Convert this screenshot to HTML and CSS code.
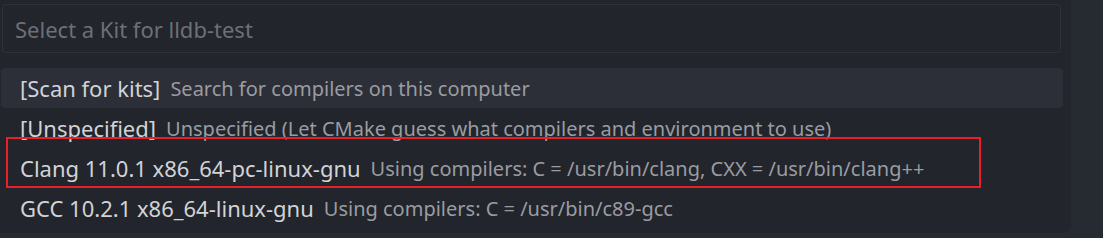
FILE: index.html
```html
<!DOCTYPE html>
<html lang="en">
<head>
  <meta charset="UTF-8">
  <title>Select a Kit</title>
  <link rel="stylesheet" href="styles.css">
</head>
<body>

  <div class="panel">
    <div class="entrada">Select a Kit for lldb-test</div>

    <div class="lista">
      <div class="fila activa">
        <span class="etiqueta">[Scan for kits]</span>
        <span class="desc">Search for compilers on this computer</span>
      </div>
      <div class="fila">
        <span class="etiqueta">[Unspecified]</span>
        <span class="desc">Unspecified (Let CMake guess what compilers and environment to use)</span>
      </div>
      <div class="fila marcada">
        <span class="etiqueta">Clang 11.0.1 x86_64-pc-linux-gnu</span>
        <span class="desc">Using compilers: C = /usr/bin/clang, CXX = /usr/bin/clang++</span>
      </div>
      <div class="fila">
        <span class="etiqueta">GCC 10.2.1 x86_64-linux-gnu</span>
        <span class="desc">Using compilers: C = /usr/bin/c89-gcc</span>
      </div>
      <div class="fila">
        <span class="etiqueta">GCC 10.2.1 x86_64-linux-gnu</span>
        <span class="desc">Using compilers: C = /usr/bin/c99-gcc</span>
      </div>
    </div>
  </div>

</body>
</html>
```

FILE: styles.css
```css
body {
  margin: 0;
  background-color: #262a31;
  font-family: 'Noto Sans', 'Open Sans', sans-serif;
  height: 238px;
  overflow: hidden;
}

.panel {
  width: 1071px;
  height: 233px;
  background-color: #22252c;
  border-bottom-right-radius: 8px;
  overflow: hidden;
}

.entrada {
  margin: 4px 0 0 2px;
  width: 1059px;
  height: 49px;
  border: 1px solid #2e323a;
  border-radius: 4px;
  box-sizing: border-box;
  padding-left: 12px;
  display: flex;
  align-items: center;
  font-size: 22px;
  color: #6d7077;
}

.lista {
  margin-top: 15px;
}

.fila {
  margin-left: 1px;
  width: 1062px;
  height: 40px;
  padding-left: 19px;
  box-sizing: border-box;
  display: flex;
  align-items: center;
  white-space: nowrap;
  border-radius: 4px;
}

.fila.activa {
  background-color: #2c2f37;
}

.etiqueta {
  font-size: 22px;
  color: #d2d3d6;
  margin-right: 10px;
}

.desc {
  font-size: 20px;
  color: #9a9ca1;
}

.marcada {
  position: relative;
}

.marcada::after {
  content: "";
  position: absolute;
  left: 5px;
  top: -11px;
  width: 975px;
  height: 51px;
  border: 2px solid #e8202a;
  box-sizing: border-box;
}
```
